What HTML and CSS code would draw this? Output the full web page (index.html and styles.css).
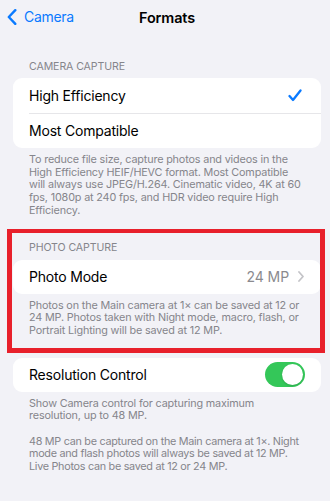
FILE: index.html
```html
<!DOCTYPE html>
<html lang="en">
<head>
<meta charset="utf-8">
<title>Formats</title>
<link rel="stylesheet" href="styles.css">
</head>
<body>
<div class="screen">
  <header class="nav">
    <a class="back">
      <svg class="back-icon" width="10" height="16" viewBox="0 0 10 16"><polyline points="8.3,1.2 1.8,8 8.3,14.8" fill="none" stroke="#0a7aff" stroke-width="2.4" stroke-linecap="round" stroke-linejoin="round"/></svg>
      <span>Camera</span>
    </a>
    <h1 class="title">Formats</h1>
  </header>

  <section class="group">
    <div class="group-header">CAMERA CAPTURE</div>
    <div class="card">
      <div class="row">
        <span class="label">High Efficiency</span>
        <svg class="check" width="14" height="13" viewBox="0 0 14 13"><polyline points="1.5,7 5,11 12.5,1.5" fill="none" stroke="#0a7aff" stroke-width="2.3" stroke-linecap="round" stroke-linejoin="round"/></svg>
      </div>
      <div class="sep"></div>
      <div class="row">
        <span class="label">Most Compatible</span>
      </div>
    </div>
    <p class="footer">To reduce file size, capture photos and videos in the High Efficiency HEIF/HEVC format. Most Compatible will always use JPEG/H.264. Cinematic video, 4K at 60 fps, 1080p at 240 fps, and HDR video require High Efficiency.</p>
  </section>

  <section class="group group-photo">
    <div class="group-header">PHOTO CAPTURE</div>
    <div class="card">
      <div class="row">
        <span class="label">Photo Mode</span>
        <span class="value">24 MP</span>
        <svg class="chev" width="6" height="11" viewBox="0 0 6 11"><polyline points="1,1 5,5.5 1,10" fill="none" stroke="#c4c4c8" stroke-width="1.8" stroke-linecap="round" stroke-linejoin="round"/></svg>
      </div>
    </div>
    <p class="footer">Photos on the Main camera at 1× can be saved at 12 or 24 MP. Photos taken with Night mode, macro, flash, or Portrait Lighting will be saved at 12 MP.</p>
    <div class="highlight"></div>
  </section>

  <section class="group group-res">
    <div class="card">
      <div class="row">
        <span class="label">Resolution Control</span>
        <span class="toggle"><span class="knob"></span></span>
      </div>
    </div>
    <p class="footer">Show Camera control for capturing maximum resolution, up to 48 MP.</p>
    <p class="footer footer-2">48 MP can be captured on the Main camera at 1×. Night mode and flash photos will always be saved at 12 MP. Live Photos can be saved at 12 or 24 MP.</p>
  </section>
</div>
</body>
</html>
```

FILE: styles.css
```css
* { box-sizing: border-box; }
html, body { margin: 0; padding: 0; }
body {
  background: #f2f2f7;
  font-family: Inter, "Liberation Sans", sans-serif;
  color: #000;
  width: 330px;
  height: 501px;
  overflow: hidden;
}
.screen { position: relative; }

.nav {
  position: relative;
  height: 34px;
  display: flex;
  align-items: center;
  justify-content: center;
}
.back {
  position: absolute;
  left: 7px;
  top: 9px;
  display: flex;
  align-items: center;
  gap: 7px;
  color: #0a7aff;
  font-size: 14px;
  line-height: 16px;
  letter-spacing: -0.3px;
}
.back-icon { display: block; }
.title {
  margin: 0 0 0 4px;
  font-size: 14.4px;
  font-weight: 600;
  letter-spacing: -0.1px;
}

.group { position: relative; padding: 0 9px 0 13px; }
.group-header {
  padding: 26px 16px 0;
  height: 44px;
  font-size: 10.6px;
  line-height: 13px;
  color: #85858b;
  letter-spacing: -0.1px;
}
.group-photo .group-header { padding-top: 23px; height: 42px; }
.group-res { margin-top: 20px; }

.card {
  background: #fff;
  border-radius: 9px;
  overflow: hidden;
}
.row {
  height: 34.5px;
  display: flex;
  align-items: center;
  padding: 0 16px;
  font-size: 14px;
  letter-spacing: -0.2px;
}
.group-photo .row, .group-res .row { height: 34px; }
.label { flex: 1; }
.sep {
  height: 1px;
  background: #dcdce0;
  margin-left: 16px;
  transform: scaleY(0.7);
}
.check { margin-right: 3px; }
.value { color: #8a8a8e; margin-right: 9px; letter-spacing: -0.1px; font-size: 14px; }
.chev { margin-right: 1px; }

.toggle {
  width: 40px;
  height: 25px;
  border-radius: 13px;
  background: #34c759;
  position: relative;
}
.knob {
  position: absolute;
  right: 2px;
  top: 2px;
  width: 21px;
  height: 21px;
  border-radius: 50%;
  background: #fff;
  box-shadow: 0 1px 2px rgba(0,0,0,0.15);
}

.footer {
  margin: 0;
  padding: 6px 16px 0;
  font-size: 10.8px;
  line-height: 12.7px;
  color: #85858b;
  letter-spacing: -0.15px;
}
.footer-2 { padding-top: 12.7px; letter-spacing: -0.28px; }

.highlight {
  position: absolute;
  left: 7px;
  right: 5px;
  top: 11px;
  height: 124px;
  border: 5px solid #e8202b;
  border-top-width: 4px;
  pointer-events: none;
}
```
